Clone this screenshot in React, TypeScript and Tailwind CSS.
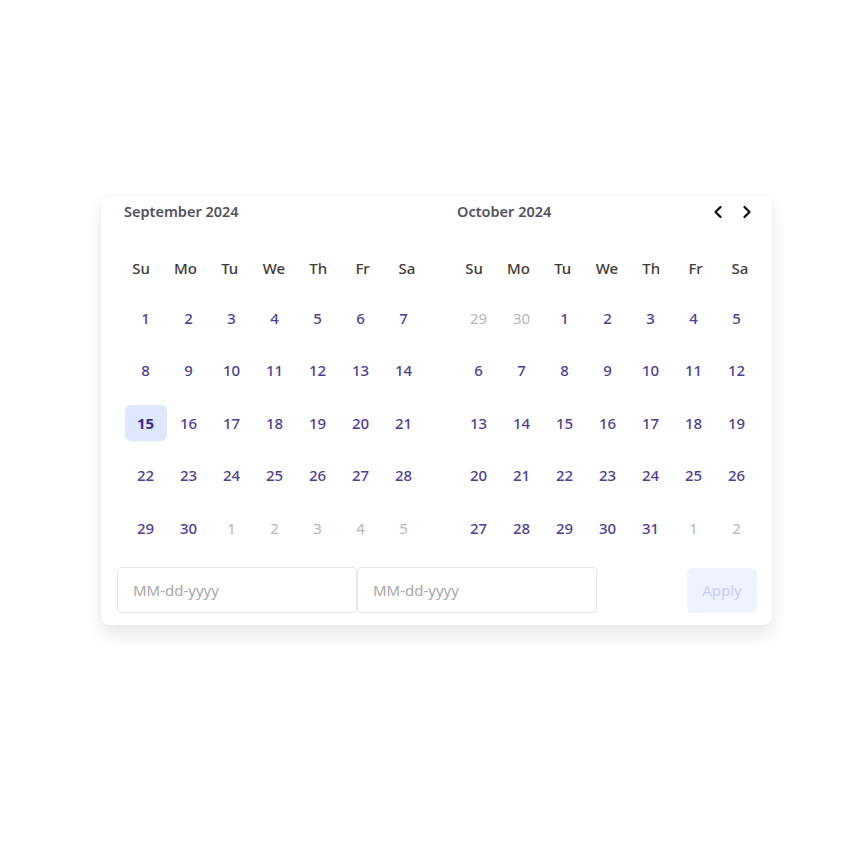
import React from 'react';
import { ChevronLeft, ChevronRight } from 'lucide-react';

const weekdays = ['Su', 'Mo', 'Tu', 'We', 'Th', 'Fr', 'Sa'];

type Day = { n: number; muted?: boolean; selected?: boolean };

const september: Day[] = [
  ...Array.from({ length: 30 }, (_, i) => ({ n: i + 1, selected: i + 1 === 15 })),
  ...[1, 2, 3, 4, 5].map((n) => ({ n, muted: true })),
];

const october: Day[] = [
  { n: 29, muted: true },
  { n: 30, muted: true },
  ...Array.from({ length: 31 }, (_, i) => ({ n: i + 1 })),
  { n: 1, muted: true },
  { n: 2, muted: true },
];

function Month({ title, days, nav }: { title: string; days: Day[]; nav?: boolean }) {
  return (
    <div className="w-[301px]">
      <div className="flex h-8 items-center justify-between">
        <span className="text-[14.5px] font-semibold text-[#52525b]">{title}</span>
        {nav && (
          <div className="mr-[1px] flex items-center gap-[9px] text-[#111]">
            <ChevronLeft size={20} strokeWidth={2.75} />
            <ChevronRight size={20} strokeWidth={2.75} />
          </div>
        )}
      </div>
      <div className="mt-[22px] -ml-[5px] grid w-[310px] grid-cols-7">
        {weekdays.map((d) => (
          <div key={d} className="flex h-9 items-center justify-center text-[15px] font-medium text-[#3f3a36]">
            {d}
          </div>
        ))}
      </div>
      <div className="mt-[14px] grid grid-cols-7 gap-y-[16.5px]">
        {days.map((d, i) => (
          <div key={i} className="flex h-9 items-center justify-center">
            <div
              className={
                d.selected
                  ? 'flex h-9 w-[42px] items-center justify-center rounded-md bg-[#dde7fd] text-[15px] font-bold text-[#3d2c84]'
                  : d.muted
                    ? 'text-[15px] text-[#b7b7b7]'
                    : 'text-[15px] font-medium text-[#4f3e94]'
              }
            >
              {d.n}
            </div>
          </div>
        ))}
      </div>
    </div>
  );
}

export default function App() {
  return (
    <div className="min-h-screen bg-white pt-[196px] pl-[101px]" style={{ fontFamily: '"Noto Sans", "Open Sans", sans-serif' }}>
      <div className="w-[671px] rounded-lg bg-white px-4 pb-3 shadow-[0_10px_18px_rgba(0,0,0,0.09),0_0_4px_rgba(0,0,0,0.03)]">
        <div className="flex gap-[32px] pl-[7px]">
          <Month title="September 2024" days={september} />
          <Month title="October 2024" days={october} nav />
        </div>
        <div className="mt-[21px] flex items-center">
          <input
            placeholder="MM-dd-yyyy"
            className="h-[46px] w-[240px] rounded border border-[#e5e7eb] px-[15px] text-[15px] text-[#333] outline-none placeholder:text-[#a8a8a8]"
          />
          <input
            placeholder="MM-dd-yyyy"
            className="h-[46px] w-[240px] rounded border border-[#e5e7eb] px-[15px] text-[15px] text-[#333] outline-none placeholder:text-[#a8a8a8]"
          />
          <button className="mr-[-1px] ml-auto h-[45px] w-[70px] rounded-md bg-[#eef3ff] text-[15px] text-[#c9cdf2]">
            Apply
          </button>
        </div>
      </div>
    </div>
  );
}
